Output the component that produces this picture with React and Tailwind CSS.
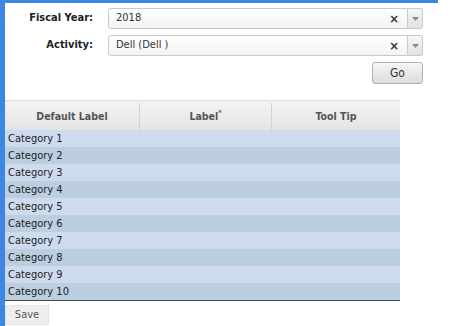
import { useState } from 'react';

const rows = Array.from({ length: 10 }, (_, i) => `Category ${i + 1}`);

const Combo = ({ value }) => (
  <div className="flex h-[21px]">
    <div className="flex w-[300px] items-center justify-between rounded-l-[3px] border border-[#c9c9c9] bg-gradient-to-b from-white to-[#f3f3f3] pl-[7px] pr-[8px] text-[11px] text-[#333]">
      <span>{value}</span>
      <span className="text-[13px] font-bold leading-none text-[#333]">×</span>
    </div>
    <div className="flex w-[15px] items-center justify-center rounded-r-[3px] border border-l-0 border-[#c9c9c9] bg-gradient-to-b from-[#f7f7f7] to-[#e2e2e2]">
      <svg width="7" height="4" viewBox="0 0 7 4">
        <path d="M0 0h7L3.5 4z" fill="#8a8a8a" />
      </svg>
    </div>
  </div>
);

const App = () => {
  const [year] = useState('2018');

  return (
    <div className="flex h-[326px] w-[474px] overflow-hidden bg-white font-['DejaVu_Sans_Condensed','DejaVu_Sans',sans-serif] font-stretch-condensed">
      <div className="w-[5px] shrink-0 bg-[#3b87e3]" />
      <div className="flex flex-1 flex-col">
        <div className="h-[3px] w-[433px] bg-[#3b87e3]" />

        {/* Filters */}
        <div className="mt-[5px] flex flex-col gap-[6px]">
          <div className="flex items-center">
            <label className="w-[88px] text-right text-[11px] font-bold text-[#222]">Fiscal Year:</label>
            <div className="ml-[15px]">
              <Combo value={year} />
            </div>
          </div>
          <div className="flex items-center">
            <label className="w-[88px] text-right text-[11px] font-bold text-[#222]">Activity:</label>
            <div className="ml-[15px]">
              <Combo value="Dell (Dell )" />
            </div>
          </div>
        </div>

        <div className="mt-[6px] flex w-[418px] justify-end">
          <button className="h-[22px] w-[51px] rounded-[3px] border border-[#b0b0b0] bg-gradient-to-b from-[#f6f6f6] to-[#dcdcdc] text-[12px] text-[#333]">
            Go
          </button>
        </div>

        {/* Grid */}
        <div className="mt-[16px] w-[395px]">
          <div className="grid h-[30px] grid-cols-[135px_132px_128px] border-t border-[#dddddd] bg-gradient-to-b from-[#f4f4f4] to-[#e4e4e4] pt-[2px] text-[10.5px] font-bold text-[#555]">
            <div className="flex items-center justify-center border-r border-[#d2d2d2]">Default Label</div>
            <div className="flex items-center justify-center border-r border-[#d2d2d2]">
              Label<sup className="text-[7px]">*</sup>
            </div>
            <div className="flex items-center justify-center">Tool Tip</div>
          </div>
          <div className="border-b border-[#444b53]">
            {rows.map((r, i) => (
              <div
                key={r}
                className={`flex h-[17px] items-center pl-[3px] pt-[1px] text-[11px] text-[#222] ${i % 2 === 0 ? 'bg-[#cedbef]' : 'bg-[#bccfe0]'}`}
              >
                {r}
              </div>
            ))}
          </div>
          <button className="h-[20px] w-[44px] border border-[#e4e4e4] bg-[#efefef] text-[11px] text-[#555]">
            Save
          </button>
        </div>
      </div>
    </div>
  );
};

export default App;
